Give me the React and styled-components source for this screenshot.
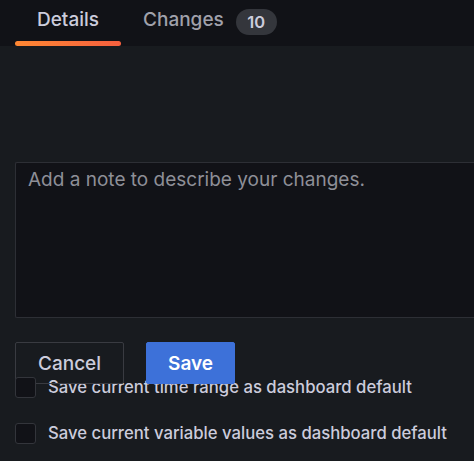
import React from 'react'
import styled, { createGlobalStyle } from 'styled-components'

const GlobalStyle = createGlobalStyle`
  html, body {
    margin: 0;
    padding: 0;
    background: #181b1f;
    overflow: hidden;
  }
  body {
    font-family: Inter, "Noto Sans", sans-serif;
    color: #ccccdc;
  }
  * { box-sizing: border-box; }
`;

const Page = styled.div`
  width: 474px;
  height: 461px;
  display: flex;
  flex-direction: column;
`;

const TabBar = styled.div`
  height: 46px;
  background: #111217;
  display: flex;
  padding-left: 15px;
`;

const Tab = styled.div`
  position: relative;
  display: flex;
  align-items: flex-start;
  gap: 12px;
  padding: 8px 22px 0;
  font-size: 19px;
  line-height: 24px;
  font-weight: 500;
  color: ${p => (p.$active ? '#ccccdc' : '#a0a1ab')};
`;

const Underline = styled.span`
  position: absolute;
  left: 0;
  right: 0;
  bottom: 0;
  height: 5px;
  border-radius: 3px;
  background: linear-gradient(90deg, #ff8833 0%, #f55f3e 100%);
`;

const Badge = styled.span`
  margin-top: 1px;
  height: 26px;
  min-width: 41px;
  padding: 0 10px;
  border-radius: 13px;
  background: #34363c;
  color: #ccccdc;
  font-size: 16.5px;
  font-weight: 600;
  line-height: 26px;
  text-align: center;
`;

const Content = styled.div`
  padding: 116px 0 0 15px;
  display: flex;
  flex-direction: column;
`;

const Note = styled.textarea`
  align-self: stretch;
  height: 156px;
  margin: 0;
  padding: 5px 12px;
  resize: none;
  background: #111217;
  border: 1px solid #2d2f35;
  border-right: none;
  border-radius: 2px 0 0 2px;
  color: #ccccdc;
  font-family: Inter, "Noto Sans", sans-serif;
  font-size: 19px;
  line-height: 24px;
  outline: none;

  &::placeholder {
    color: #8e8f97;
  }
`;

const ButtonRow = styled.div`
  position: relative;
  z-index: 1;
  display: flex;
  gap: 22px;
  margin-top: 24px;
`;

const Button = styled.button`
  height: 42px;
  padding: 0 ${p => (p.$primary ? 21 : 22)}px;
  border-radius: 2px;
  font-family: Inter, "Noto Sans", sans-serif;
  font-size: 19px;
  font-weight: ${p => (p.$primary ? 600 : 500)};
  color: ${p => (p.$primary ? '#ffffff' : '#ccccdc')};
  background: ${p => (p.$primary ? '#3d71d9' : 'transparent')};
  border: 1px solid ${p => (p.$primary ? '#3d71d9' : '#393b41')};
  cursor: pointer;
`;

const Options = styled.div`
  display: flex;
  flex-direction: column;
  gap: 25px;
  margin-top: -7px;
`;

const Option = styled.label`
  display: flex;
  align-items: center;
  gap: 12px;
  font-size: 16.7px;
  font-weight: 500;
  line-height: 21px;
  color: #ccccdc;
`;

const Box = styled.span`
  position: relative;
  z-index: 2;
  flex: none;
  width: 21px;
  height: 21px;
  border-radius: 3px;
  background: #111217;
  border: 1px solid #33353b;
`;

export default function App() {
  return (
    <Page>
      <GlobalStyle />
      <TabBar>
        <Tab $active>
          Details
          <Underline />
        </Tab>
        <Tab>
          Changes
          <Badge>10</Badge>
        </Tab>
      </TabBar>
      <Content>
        <Note placeholder="Add a note to describe your changes." />
        <ButtonRow>
          <Button>Cancel</Button>
          <Button $primary>Save</Button>
        </ButtonRow>
        <Options>
          <Option>
            <Box />
            Save current time range as dashboard default
          </Option>
          <Option>
            <Box />
            Save current variable values as dashboard default
          </Option>
        </Options>
      </Content>
    </Page>
  )
}
